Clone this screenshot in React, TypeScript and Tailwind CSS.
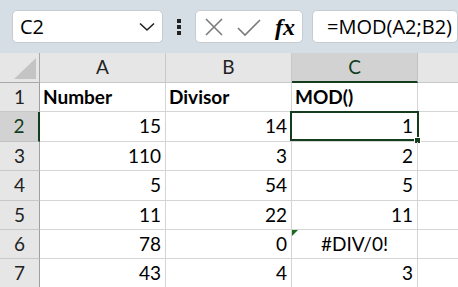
import React from 'react'

const ROWS = [
  { n: 1, h: 'h-[29px]', a: 'Number', b: 'Divisor', c: 'MOD()', head: true },
  { n: 2, h: 'h-[30px]', a: '15', b: '14', c: '1', sel: true },
  { n: 3, h: 'h-[29px]', a: '110', b: '3', c: '2' },
  { n: 4, h: 'h-[30px]', a: '5', b: '54', c: '5' },
  { n: 5, h: 'h-[29px]', a: '11', b: '22', c: '11' },
  { n: 6, h: 'h-[29px]', a: '78', b: '0', c: '#DIV/0!', err: true },
  { n: 7, h: 'h-[29px]', a: '43', b: '4', c: '3' },
]

const COLS = ['A', 'B', 'C']

export default function App() {
  return (
    <div className="w-[458px] h-[287px] overflow-hidden bg-white">
      {/* Formula bar */}
      <div className="h-[53px] bg-[#d5dde5] flex items-center font-['Open_Sans',sans-serif] text-[20px] text-black">
        <div className="ml-[12px] w-[151px] h-[33px] bg-white rounded-[5px] border border-[#c6ccd2] flex items-center pl-[7px] pr-[7px]">
          <span className="flex-1 leading-none">C2</span>
          <svg width="16" height="10" viewBox="0 0 16 10">
            <path d="M1 1.5 L8 8 L15 1.5" fill="none" stroke="#222" strokeWidth="1.6" />
          </svg>
        </div>
        <div className="ml-[14px] w-[4px] flex flex-col gap-[2px]">
          <div className="w-[4px] h-[4px] bg-[#222]" />
          <div className="w-[4px] h-[4px] bg-[#222]" />
          <div className="w-[4px] h-[4px] bg-[#222]" />
        </div>
        <div className="ml-[14px] w-[108px] h-[33px] bg-white rounded-[5px] border border-[#c6ccd2] flex items-center pl-[8px]">
          <svg width="20" height="20" viewBox="0 0 20 20">
            <path d="M2 2 L18 18 M18 2 L2 18" stroke="#7a7a7a" strokeWidth="1.6" fill="none" />
          </svg>
          <svg width="26" height="20" viewBox="0 0 26 20" className="ml-[12px]">
            <path d="M2 11 L9 18 L24 3" stroke="#7a7a7a" strokeWidth="1.6" fill="none" />
          </svg>
          <span className="ml-[13px] font-['Liberation_Serif',serif] italic font-bold text-[24px] leading-none">fx</span>
        </div>
        <div className="ml-[9px] w-[146px] h-[33px] bg-white rounded-[5px] border border-[#c6ccd2] flex items-center pl-[14px] whitespace-nowrap">
          =MOD(A2;B2)
        </div>
      </div>

      {/* Grid */}
      <div className="grid grid-cols-[40px_126px_126px_126px_40px] font-['Lato',sans-serif] text-[19px] text-black">
        <div className="h-[30px] bg-[#e6e6e6] border-r border-b border-[#a9a9a9] relative">
          <svg width="22" height="21" viewBox="0 0 22 21" className="absolute right-[3px] bottom-[3px]">
            <path d="M22 0 L22 21 L0 21 Z" fill="#c4c4c4" />
          </svg>
        </div>
        {COLS.map(c => (
          <div
            key={c}
            className={
              c === 'C'
                ? 'h-[30px] bg-[#d2d2d2] border-r border-[#c2c2c2] border-b-2 border-b-[#133d1d] flex items-center justify-center text-[#133d1d]'
                : 'h-[30px] bg-[#e6e6e6] border-r border-b border-[#c8c8c8] flex items-center justify-center text-[#222]'
            }
          >
            {c}
          </div>
        ))}
        <div className="h-[30px] bg-[#e6e6e6] border-b border-[#c8c8c8]" />

        {ROWS.map(r => (
          <React.Fragment key={r.n}>
            <div
              className={
                r.sel
                  ? `${r.h} bg-[#d2d2d2] border-b border-[#c2c2c2] border-r-2 border-r-[#133d1d] flex items-center justify-center text-[#133d1d]`
                  : `${r.h} bg-[#e6e6e6] border-b border-[#c8c8c8] border-r border-r-[#9e9e9e] flex items-center justify-center text-[#222]`
              }
            >
              {r.n}
            </div>
            <div className={`${r.h} border-r border-b border-[#d4d4d4] flex items-center ${r.head ? 'pl-[3px] font-bold' : 'justify-end pr-[4px]'}`}>
              {r.a}
            </div>
            <div className={`${r.h} border-r border-b border-[#d4d4d4] flex items-center ${r.head ? 'pl-[3px] font-bold' : 'justify-end pr-[4px]'}`}>
              {r.b}
            </div>
            <div
              className={`${r.h} relative border-r border-b border-[#d4d4d4] flex items-center ${
                r.head ? 'pl-[3px] font-bold' : r.err ? 'justify-center' : 'justify-end pr-[4px]'
              }`}
            >
              {r.c}
              {r.err && (
                <svg width="6" height="6" viewBox="0 0 6 6" className="absolute left-0 top-0">
                  <path d="M0 0 L6 0 L0 6 Z" fill="#1a6b1f" />
                </svg>
              )}
              {r.sel && (
                <>
                  <div className="absolute -left-[2px] -top-[1px] -right-[2px] bottom-0 border-2 border-[#133d1d]" />
                  <div className="absolute -right-[4px] -bottom-[3px] w-[7px] h-[7px] bg-[#133d1d] border border-white" />
                </>
              )}
            </div>
            <div className={`${r.h} border-b border-[#d4d4d4]`} />
          </React.Fragment>
        ))}
      </div>
    </div>
  )
}
